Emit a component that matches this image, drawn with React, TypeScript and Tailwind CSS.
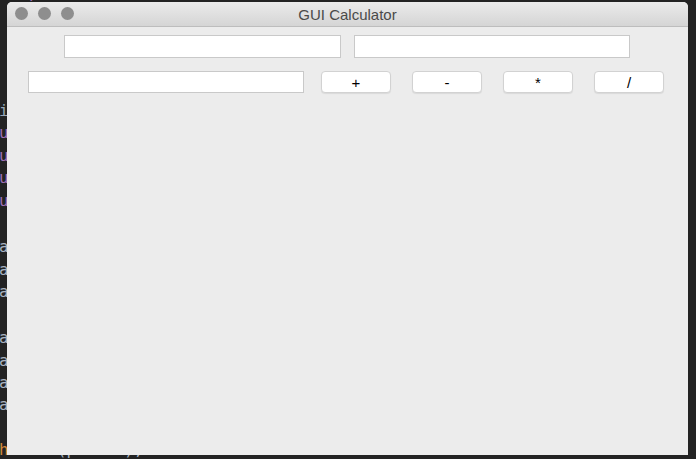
import React from "react";

const codeLines: { y: number; ch: string; color: string }[] = [
  { y: 102, ch: "i", color: "text-[#9aa7b8]" },
  { y: 124, ch: "u", color: "text-[#9d6fb5]" },
  { y: 147, ch: "u", color: "text-[#9d6fb5]" },
  { y: 169, ch: "u", color: "text-[#9d6fb5]" },
  { y: 192, ch: "u", color: "text-[#9d6fb5]" },
  { y: 238, ch: "a", color: "text-[#a9b4c2]" },
  { y: 261, ch: "a", color: "text-[#a9b4c2]" },
  { y: 283, ch: "a", color: "text-[#a9b4c2]" },
  { y: 329, ch: "a", color: "text-[#a9b4c2]" },
  { y: 352, ch: "a", color: "text-[#a9b4c2]" },
  { y: 374, ch: "a", color: "text-[#a9b4c2]" },
  { y: 396, ch: "a", color: "text-[#a9b4c2]" },
];

const ops = ["+", "-", "*", "/"];

const App: React.FC = () => {
  return (
    <div className="relative w-[696px] h-[459px] overflow-hidden bg-[#232323] font-['Liberation_Sans',Arial,sans-serif]">
      {/* editor text behind the window */}
      <div className="absolute -top-[16px] left-0 whitespace-pre font-['DejaVu_Sans_Mono',monospace] text-[16px] leading-[18px]">
        <span className="text-[#9d6fb5]">   private </span>
        <span className="text-[#d2883a]">  int </span>
        <span className="text-[#7fa7d6]">result, value; </span>
        <span className="text-[#d2883a]">       x</span>
      </div>
      {codeLines.map((l, i) => (
        <div
          key={i}
          className={`absolute -left-[1px] font-['DejaVu_Sans_Mono',monospace] text-[16px] leading-[18px] ${l.color}`}
          style={{ top: l.y }}
        >
          {l.ch}
        </div>
      ))}
      <div className="absolute top-[441px] -left-[1px] whitespace-pre font-['DejaVu_Sans_Mono',monospace] text-[16px] leading-[18px]">
        <span className="text-[#d2883a]">h</span>
        <span className="text-[#a9b4c2]">r.add(panel2);</span>
      </div>

      {/* window */}
      <div className="absolute left-[7px] top-[2px] w-[681px] h-[453px] flex flex-col rounded-t-[5px] overflow-hidden bg-[#ececec]">
        <div className="relative h-[25px] shrink-0 flex items-center justify-center bg-gradient-to-b from-[#ebebeb] to-[#d5d5d5] border-b border-[#bdbdbd]">
          <div className="absolute left-[8px] top-[5px] flex gap-[10px]">
            <div className="w-[13px] h-[13px] rounded-full bg-[#8e8e8e]" />
            <div className="w-[13px] h-[13px] rounded-full bg-[#8e8e8e]" />
            <div className="w-[13px] h-[13px] rounded-full bg-[#8e8e8e]" />
          </div>
          <span className="text-[15px] text-[#4a4a4a] leading-none">GUI Calculator</span>
        </div>

        <div className="flex pl-[57px] pt-[8px] gap-[13px]">
          <input className="w-[277px] h-[23px] bg-white border border-[#c9c9c9] outline-none" />
          <input className="w-[276px] h-[23px] bg-white border border-[#c9c9c9] outline-none" />
        </div>

        <div className="flex items-center pl-[21px] pt-[13px]">
          <input className="w-[276px] h-[22px] bg-white border border-[#c9c9c9] outline-none mr-[17px]" />
          <div className="flex gap-[21px]">
            {ops.map((op) => (
              <button
                key={op}
                className="w-[70px] h-[22px] bg-white rounded-[4px] border border-[#d2d2d2] shadow-[0_1px_1px_rgba(0,0,0,0.08)] text-[15px] text-black leading-none flex items-center justify-center"
              >
                {op}
              </button>
            ))}
          </div>
        </div>
      </div>
    </div>
  );
};

export default App;
